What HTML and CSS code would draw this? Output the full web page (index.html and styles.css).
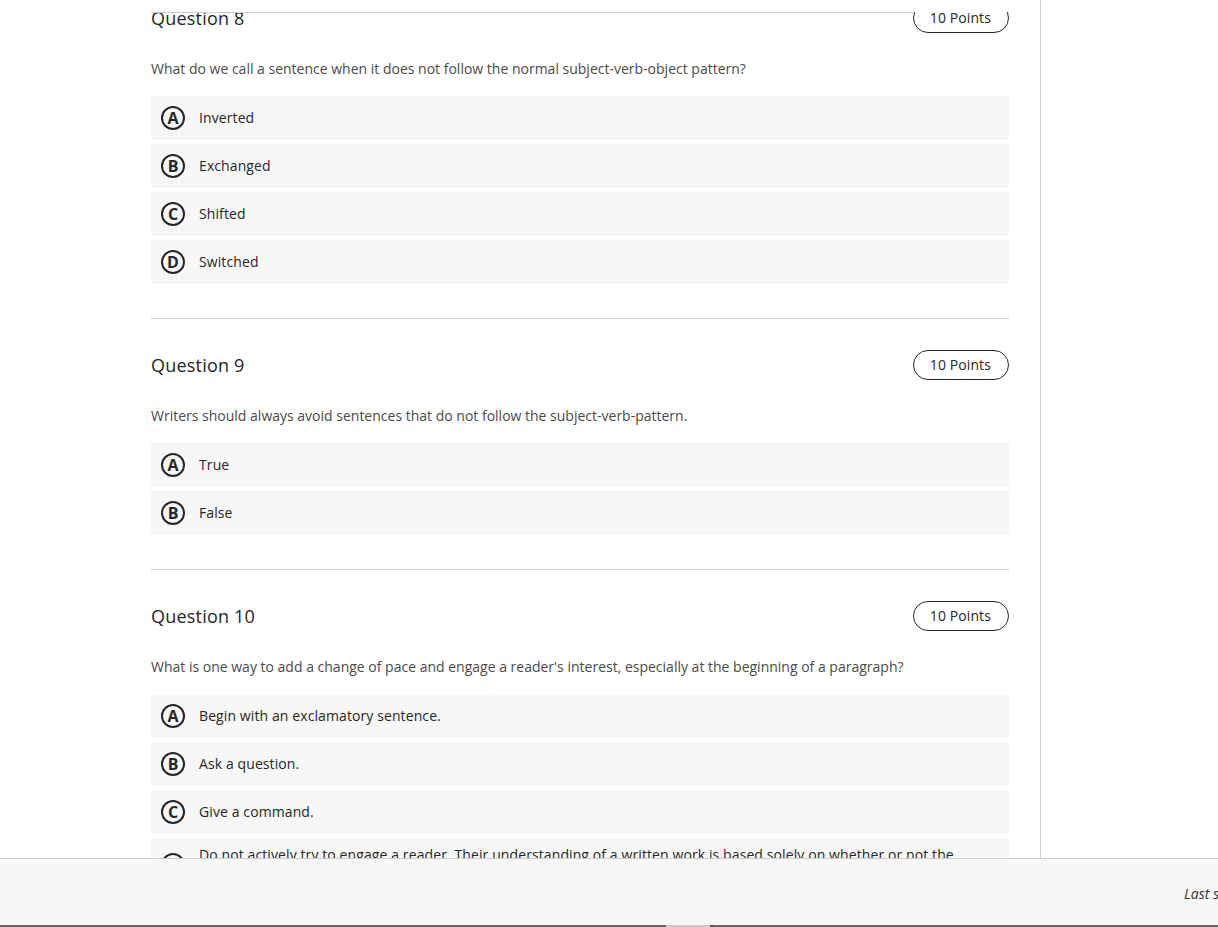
FILE: index.html
```html
<!doctype html>
<html lang="en">
<head>
  <meta charset="UTF-8">
  <title>Assessment</title>
  <link rel="stylesheet" href="styles.css">
</head>
<body>
  <div class="workspace">
    <main class="sheet">
      <div class="scroller">
        <div class="questions">

          <section class="question">
            <div class="q-head">
              <h2>Question 8</h2>
              <span class="points">10 Points</span>
            </div>
            <p class="prompt">What do we call a sentence when it does not follow the normal subject-verb-object pattern?</p>
            <ul class="choices">
              <li><span class="letter">A</span><span class="label">Inverted</span></li>
              <li><span class="letter">B</span><span class="label">Exchanged</span></li>
              <li><span class="letter">C</span><span class="label">Shifted</span></li>
              <li><span class="letter">D</span><span class="label">Switched</span></li>
            </ul>
          </section>

          <section class="question">
            <div class="q-head">
              <h2>Question 9</h2>
              <span class="points">10 Points</span>
            </div>
            <p class="prompt">Writers should always avoid sentences that do not follow the subject-verb-pattern.</p>
            <ul class="choices">
              <li><span class="letter">A</span><span class="label">True</span></li>
              <li><span class="letter">B</span><span class="label">False</span></li>
            </ul>
          </section>

          <section class="question">
            <div class="q-head">
              <h2>Question 10</h2>
              <span class="points">10 Points</span>
            </div>
            <p class="prompt">What is one way to add a change of pace and engage a reader's interest, especially at the beginning of a paragraph?</p>
            <ul class="choices">
              <li><span class="letter">A</span><span class="label">Begin with an exclamatory sentence.</span></li>
              <li><span class="letter">B</span><span class="label">Ask a question.</span></li>
              <li><span class="letter">C</span><span class="label">Give a command.</span></li>
              <li><span class="letter">D</span><span class="label">Do not actively try to engage a reader. Their understanding of a written work is based solely on whether or not the writing is clear.</span></li>
            </ul>
          </section>

        </div>
      </div>
    </main>
    <aside class="side"></aside>
  </div>

  <footer class="savebar">
    <span class="status">Last saved 10:42 AM</span>
  </footer>
  <div class="hscroll">
    <span class="track-a"></span>
    <span class="thumb"></span>
    <span class="notch"></span>
    <span class="track-b"></span>
  </div>
</body>
</html>
```

FILE: styles.css
```css
html, body {
  margin: 0;
  padding: 0;
  height: 100%;
  overflow: hidden;
  background: #ffffff;
}

body {
  font-family: "Open Sans", "Liberation Sans", sans-serif;
  font-size: 14px;
  color: #262626;
}

ul, li {
  margin: 0;
  padding: 0;
  list-style: none;
}

.workspace {
  display: flex;
  height: 858px;
}

.sheet {
  width: 1040px;
  flex: none;
  border-right: 1px solid #cdcdcd;
  padding-top: 12px;
  box-sizing: content-box;
}

.side {
  flex: 1;
}

.scroller {
  position: relative;
  height: 846px;
  overflow: hidden;
}

/* divider left over from the question scrolled out above */
.scroller:before {
  content: '';
  position: absolute;
  top: 0;
  left: 151px;
  width: 858px;
  height: 1px;
  background: #cdcdcd;
}

.questions {
  margin-top: -9px;
  padding-left: 151px;
  width: 858px;
}

.question {
  padding: 31px 0 34px;
  border-bottom: 1px solid #cdcdcd;
}

.question:first-child {
  padding-top: 0;
}

.q-head {
  display: flex;
  align-items: center;
  justify-content: space-between;
  height: 30px;
}

.q-head h2 {
  margin: 0;
  font-size: 18px;
  font-weight: 400;
  line-height: 24px;
  letter-spacing: 0.2px;
  color: #262626;
}

.points {
  position: relative;
  z-index: 1;
  height: 28px;
  line-height: 28px;
  padding: 0 17px 0 16px;
  border: 1px solid #262626;
  border-radius: 15px;
  background: #ffffff;
  font-size: 14px;
  letter-spacing: 0.1px;
  color: #262626;
}

.prompt {
  margin: 26px 0 17px;
  font-size: 14px;
  line-height: 20px;
  color: #4a4a4a;
}

.choices {
  display: flex;
  flex-direction: column;
  gap: 4px;
}

.choices li {
  display: flex;
  align-items: center;
  min-height: 30px;
  padding: 7px 30px 7px 10px;
  background: #f7f7f7;
}

.letter {
  flex: none;
  width: 20px;
  height: 20px;
  line-height: 20px;
  border: 2px solid #262626;
  border-radius: 50%;
  text-align: center;
  font-size: 16px;
  font-weight: 700;
  color: #262626;
  margin-right: 14px;
}

.label {
  font-size: 14px;
  line-height: 20px;
  letter-spacing: 0.1px;
  color: #262626;
}

.savebar {
  height: 66px;
  border-top: 1px solid #cdcdcd;
  background: #f7f7f7;
  display: flex;
  align-items: center;
  padding-left: 1184px;
  white-space: nowrap;
}

.status {
  font-style: italic;
  font-size: 14px;
  color: #333333;
  padding-top: 3px;
}

.hscroll {
  display: flex;
  height: 2px;
}

.hscroll span {
  display: block;
  height: 2px;
}

.track-a {
  width: 666px;
  background: #666666;
}

.thumb {
  width: 44px;
  background: #c8c8c8;
}

.notch {
  width: 3px;
  background: #555555;
}

.track-b {
  flex: 1;
  background: #666666;
}
```
